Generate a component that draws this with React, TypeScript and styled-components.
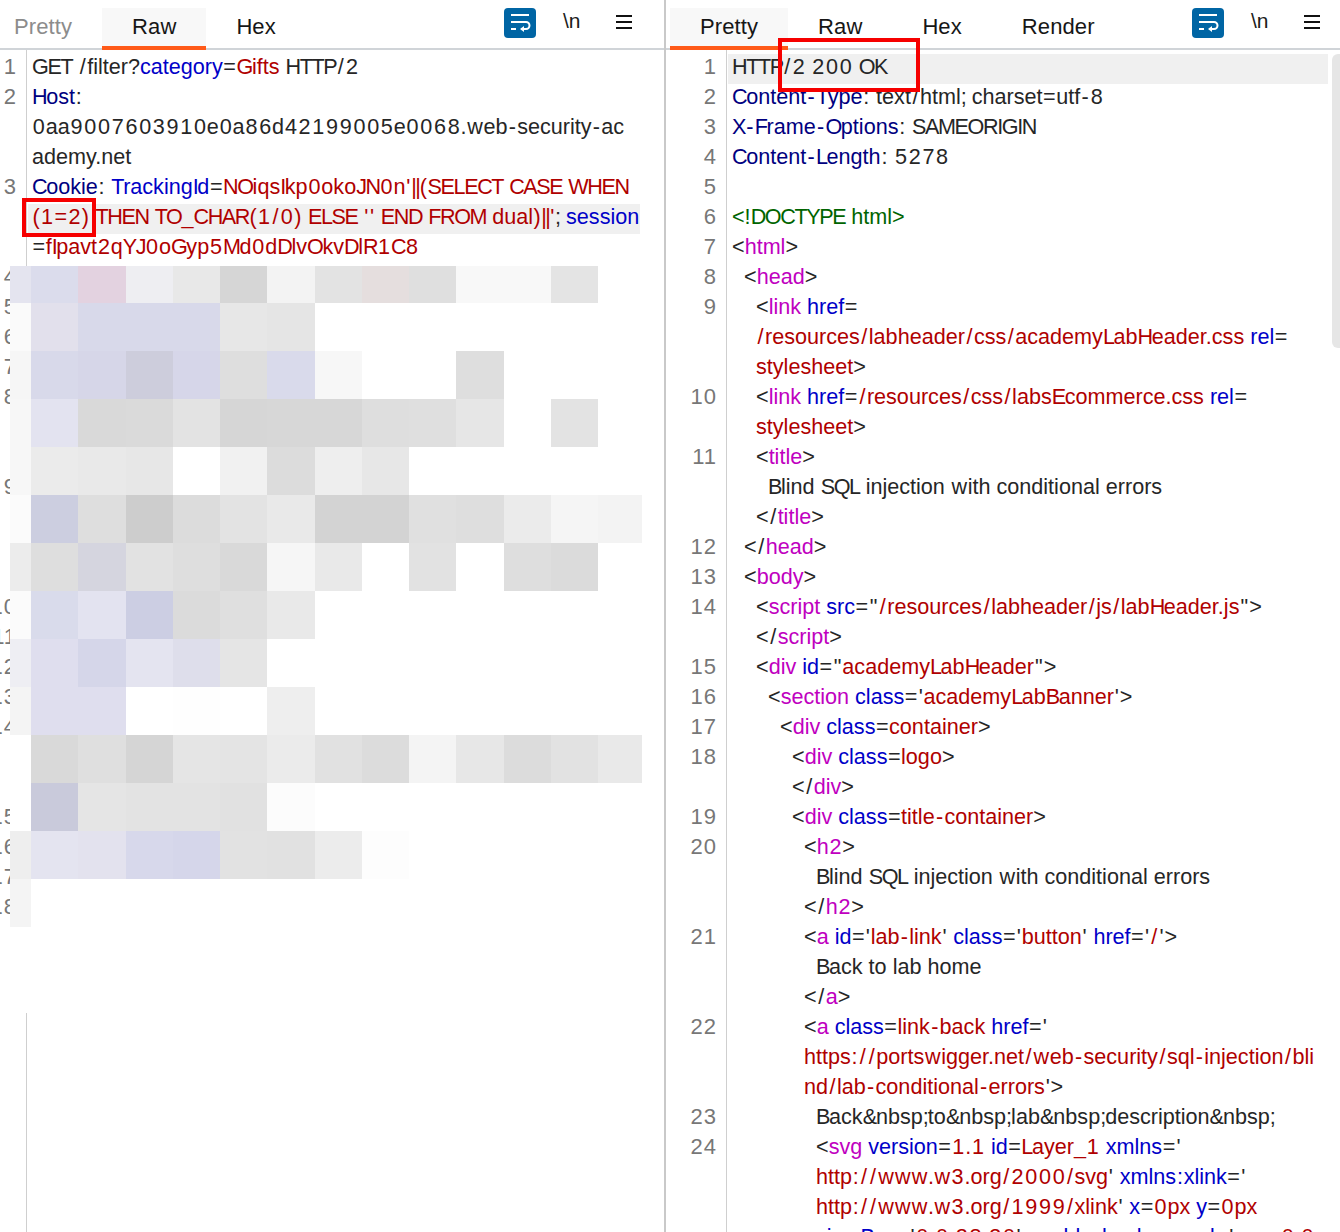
import React from "react";
import styled, { createGlobalStyle } from "styled-components";

const Global = createGlobalStyle`
  html, body { margin: 0; padding: 0; background: #fff; }
  body { width: 1340px; height: 1232px; overflow: hidden; font-family: "Liberation Sans", Arial, sans-serif; }
`;

const Page = styled.div`
  display: flex;
  width: 1340px;
  height: 1232px;
  overflow: hidden;
  position: relative;
`;
const Pane = styled.section<{ $w: number }>`
  width: ${(p) => p.$w}px;
  flex: none;
  display: flex;
  flex-direction: column;
  position: relative;
  overflow: hidden;
`;
const Divider = styled.div`
  width: 2px;
  flex: none;
  background: #c9c9c9;
`;
const Bar = styled.header<{ $start: number; $end: number }>`
  height: 50px;
  flex: none;
  box-sizing: border-box;
  border-bottom: 2px solid #d0d4d8;
  display: flex;
  padding: 0 ${(p) => p.$end}px 0 ${(p) => p.$start}px;
`;
const Tabs = styled.nav<{ $shift: number }>`
  display: flex;
  margin-left: ${(p) => p.$shift}px;
`;
const Tab = styled.div<{ $active?: boolean; $muted?: boolean }>`
  box-sizing: border-box;
  height: 42px;
  margin-top: 8px;
  padding: 6px 30px 0;
  font-size: 22px;
  line-height: 26px;
  letter-spacing: 0.1px;
  color: ${(p) => (p.$muted ? "#8c8c8c" : "#161616")};
  background: ${(p) => (p.$active ? "#f8f8f8" : "transparent")};
  border-bottom: 4px solid ${(p) => (p.$active ? "#ff5a19" : "transparent")};
`;
const Tools = styled.div`
  margin-left: auto;
  display: flex;
  align-items: flex-start;
`;
const Wrap = styled.svg`
  width: 32px;
  height: 30px;
  margin-top: 8px;
  display: block;
`;
const NewLine = styled.div`
  width: 18px;
  margin: 9px 0 0 27px;
  font-size: 21px;
  line-height: 24px;
  color: #1c1c1c;
`;
const Burger = styled.svg`
  width: 16px;
  height: 14px;
  margin: 15px 0 0 35px;
  display: block;
`;
const Editor = styled.div<{ $line: number }>`
  flex: 1;
  min-height: 0;
  padding-top: 4px;
  background: linear-gradient(#cfcfcf, #cfcfcf) no-repeat ${(p) => p.$line}px 0 / 1px 100%;
`;
const Row = styled.div`
  display: flex;
  height: 30px;
`;
const Num = styled.div<{ $w: number; $gap: number }>`
  width: ${(p) => p.$w}px;
  box-sizing: border-box;
  padding-right: ${(p) => p.$gap}px;
  flex: none;
  display: flex;
  justify-content: flex-end;
  font-size: 22px;
  line-height: 26px;
  color: #777;
  letter-spacing: 1px;
`;
const Code = styled.div<{ $pad: number; $mark?: boolean; $end: number }>`
  flex: 1;
  min-width: 0;
  box-sizing: border-box;
  margin-right: ${(p) => p.$end}px;
  padding-left: ${(p) => p.$pad}px;
  font-size: 21.6px;
  line-height: 26px;
  white-space: pre;
  color: #262626;
  background: ${(p) => (p.$mark ? "#f0f0f0" : "transparent")};
`;
const Tok = styled.span<{ $k: string }>`
  color: ${(p) =>
    ({ t: "#262626", h: "#000080", a: "#0000c8", v: "#b00000", m: "#c000c0", g: "#006400" } as Record<string, string>)[p.$k]};
`;
const Run = styled.span<{ $ls: number }>`
  letter-spacing: ${(p) => p.$ls}px;
  margin: 0 ${(p) => -Math.max(p.$ls, 0) / 2}px 0 ${(p) => Math.max(p.$ls, 0) / 2}px;
`;
const Mosaic = styled.div`
  position: absolute;
  left: 10px;
  top: 266px;
  width: 632px;
  height: 747px;
  background: #fff;
  display: grid;
  grid-template-columns: 21px repeat(12, 47.25px) 44px;
  grid-auto-rows: 48px;
  grid-template-rows: 37px;
`;
const Cell = styled.div<{ $c: string }>`
  background: ${(p) => p.$c};
`;
const Callout = styled.div<{ $x: number; $y: number; $w: number; $h: number }>`
  position: absolute;
  left: ${(p) => p.$x}px;
  top: ${(p) => p.$y}px;
  width: ${(p) => p.$w}px;
  height: ${(p) => p.$h}px;
  box-sizing: border-box;
  border: 4px solid #f60000;
`;
const Thumb = styled.div`
  position: absolute;
  right: 0;
  top: 54px;
  width: 8px;
  height: 294px;
  background: #e6e6e6;
  border-radius: 6px 0 0 6px;
`;

type T = [string, string];
type L = { n?: number; i?: number; mark?: boolean; x?: T[] };
const t = (s: string): T => ["t", s];
const h = (s: string): T => ["h", s];
const a = (s: string): T => ["a", s];
const v = (s: string): T => ["v", s];
const m = (s: string): T => ["m", s];
const g = (s: string): T => ["g", s];

const leftRows: L[] = [
  { n: 1, x: [t("GET /filter?"), a("category"), t("="), v("Gifts"), t(" HTTP/2")] },
  { n: 2, x: [h("Host"), t(":")] },
  { x: [t("0aa9007603910e0a86d42199005e0068.web-security-ac")] },
  { x: [t("ademy.net")] },
  { n: 3, x: [h("Cookie"), t(": "), a("TrackingId"), t("="), v("NOiqsIkp0okoJN0n'||(SELECT CASE WHEN")] },
  { mark: true, x: [v("(1=2) THEN TO_CHAR(1/0) ELSE '' END FROM dual)||'"), t("; "), a("session")] },
  { x: [t("="), v("fIpavt2qYJ0oGyp5Md0dDlvOkvDlR1C8")] },
  { n: 4 }, { n: 5 }, { n: 6 }, { n: 7 }, { n: 8 }, {}, {}, { n: 9 }, {}, {}, {},
  { n: 10 }, { n: 11 }, { n: 12 }, { n: 13 }, { n: 14 }, {}, {}, { n: 15 }, { n: 16 }, { n: 17 }, { n: 18 },
];

const tag = (name: string, ...rest: T[]): T[] => [t("<"), m(name), ...rest];

const rightRows: L[] = [
  { n: 1, mark: true, x: [t("HTTP/2 200 OK")] },
  { n: 2, x: [h("Content-Type"), t(": text/html; charset=utf-8")] },
  { n: 3, x: [h("X-Frame-Options"), t(": SAMEORIGIN")] },
  { n: 4, x: [h("Content-Length"), t(": 5278")] },
  { n: 5 },
  { n: 6, x: [g("<!DOCTYPE html>")] },
  { n: 7, x: tag("html", t(">")) },
  { n: 8, i: 1, x: tag("head", t(">")) },
  { n: 9, i: 2, x: tag("link", t(" "), a("href"), t("=")) },
  { i: 2, x: [v("/resources/labheader/css/academyLabHeader.css"), t(" "), a("rel"), t("=")] },
  { i: 2, x: [v("stylesheet"), t(">")] },
  { n: 10, i: 2, x: tag("link", t(" "), a("href"), t("="), v("/resources/css/labsEcommerce.css"), t(" "), a("rel"), t("=")) },
  { i: 2, x: [v("stylesheet"), t(">")] },
  { n: 11, i: 2, x: tag("title", t(">")) },
  { i: 3, x: [t("Blind SQL injection with conditional errors")] },
  { i: 2, x: [t("</"), m("title"), t(">")] },
  { n: 12, i: 1, x: [t("</"), m("head"), t(">")] },
  { n: 13, i: 1, x: tag("body", t(">")) },
  { n: 14, i: 2, x: tag("script", t(" "), a("src"), t('="'), v("/resources/labheader/js/labHeader.js"), t('">')) },
  { i: 2, x: [t("</"), m("script"), t(">")] },
  { n: 15, i: 2, x: tag("div", t(" "), a("id"), t('="'), v("academyLabHeader"), t('">')) },
  { n: 16, i: 3, x: tag("section", t(" "), a("class"), t("='"), v("academyLabBanner"), t("'>")) },
  { n: 17, i: 4, x: tag("div", t(" "), a("class"), t("="), v("container"), t(">")) },
  { n: 18, i: 5, x: tag("div", t(" "), a("class"), t("="), v("logo"), t(">")) },
  { i: 5, x: [t("</"), m("div"), t(">")] },
  { n: 19, i: 5, x: tag("div", t(" "), a("class"), t("="), v("title-container"), t(">")) },
  { n: 20, i: 6, x: tag("h2", t(">")) },
  { i: 7, x: [t("Blind SQL injection with conditional errors")] },
  { i: 6, x: [t("</"), m("h2"), t(">")] },
  { n: 21, i: 6, x: tag("a", t(" "), a("id"), t("='"), v("lab-link"), t("' "), a("class"), t("='"), v("button"), t("' "), a("href"), t("='"), v("/"), t("'>")) },
  { i: 7, x: [t("Back to lab home")] },
  { i: 6, x: [t("</"), m("a"), t(">")] },
  { n: 22, i: 6, x: tag("a", t(" "), a("class"), t("="), v("link-back"), t(" "), a("href"), t("='")) },
  { i: 6, x: [v("https://portswigger.net/web-security/sql-injection/bli")] },
  { i: 6, x: [v("nd/lab-conditional-errors"), t("'>")] },
  { n: 23, i: 7, x: [t("Back&nbsp;to&nbsp;lab&nbsp;description&nbsp;")] },
  { n: 24, i: 7, x: tag("svg", t(" "), a("version"), t("="), v("1.1"), t(" "), a("id"), t("="), v("Layer_1"), t(" "), a("xmlns"), t("='")) },
  { i: 7, x: [v("http://www.w3.org/2000/svg"), t("' "), a("xmlns:xlink"), t("='")] },
  { i: 7, x: [v("http://www.w3.org/1999/xlink"), t("' "), a("x"), t("="), v("0px"), t(" "), a("y"), t("="), v("0px")] },
  { i: 7, x: [a("viewBox"), t("='"), v("0 0 28 30"), t("' "), a("enable-background"), t("='"), v("new 0 0")] },
];

const mosaic: string[][] = [
  ["#e4e4ef", "#dbdcec", "#e3d2e0", "#eeeef2", "#e8e8e8", "#d6d6d6", "#f3f3f3", "#e3e3e3", "#e5dede", "#dfdfdf", "#f8f8f8", "#f8f8f8", "#e4e4e4", "#fff"],
  ["#fafafa", "#e2e0ec", "#d8d9ea", "#d8d9ea", "#d8d9ea", "#e7e7e7", "#e5e5e5", "#fff", "#fff", "#fff", "#fff", "#fff", "#fff", "#fff"],
  ["#f6f6f6", "#d8d9ea", "#d6d6e8", "#cdcddc", "#d6d6e9", "#dedede", "#d9daeb", "#f7f7f7", "#fff", "#fff", "#dedede", "#fff", "#fff", "#fff"],
  ["#f7f7f7", "#e3e3f0", "#d9d9d9", "#dadada", "#e3e3e3", "#d6d6d6", "#d7d7d7", "#d7d7d7", "#dedede", "#dfdfdf", "#e6e6e6", "#fff", "#e3e3e3", "#fff"],
  ["#f7f7f7", "#ebebeb", "#e9e9e9", "#e7e7e7", "#fff", "#f1f1f1", "#dcdcdc", "#eeeeee", "#e7e7e7", "#fff", "#fff", "#fff", "#fff", "#fff"],
  ["#fbfbfb", "#ccceE0", "#dedede", "#cdcdcd", "#dcdcdc", "#e3e3e3", "#e9e9e9", "#d3d3d3", "#d3d3d3", "#e0e0e0", "#dedede", "#ebebeb", "#f5f5f5", "#f3f3f3"],
  ["#ececec", "#dedede", "#d5d5df", "#e2e2e2", "#dedede", "#d9d9d9", "#f6f6f6", "#e9e9e9", "#fff", "#e2e2e2", "#fff", "#dedede", "#dbdbdb", "#fff"],
  ["#fbfbfb", "#d9dbeb", "#e3e3f0", "#ccceE3", "#dbdbdb", "#dfdfdf", "#e9e9e9", "#fff", "#fff", "#fff", "#fff", "#fff", "#fff", "#fff"],
  ["#eeeef3", "#dfdeee", "#d5d6e9", "#e4e4f0", "#dedeeb", "#e5e5e5", "#fff", "#fff", "#fff", "#fff", "#fff", "#fff", "#fff", "#fff"],
  ["#f4f4f4", "#dfdeee", "#dfdeee", "#fff", "#fefefe", "#fff", "#eeeeee", "#fff", "#fff", "#fff", "#fff", "#fff", "#fff", "#fff"],
  ["#fff", "#d9d9d9", "#dfdfdf", "#d5d5d5", "#e5e5e5", "#e4e4e4", "#ebebeb", "#e1e1e1", "#dcdcdc", "#f4f4f4", "#e7e7e7", "#dcdcdc", "#e2e2e2", "#e9e9e9"],
  ["#fff", "#c9cadb", "#e5e5e5", "#e3e3e3", "#e3e3e3", "#e1e1e1", "#fcfcfc", "#fff", "#fff", "#fff", "#fff", "#fff", "#fff", "#fff"],
  ["#eeeeee", "#e4e4f0", "#e3e2ee", "#d7d8eb", "#d5d6ea", "#e2e2e2", "#e1e1e1", "#ececec", "#fdfdfd", "#fff", "#fff", "#fff", "#fff", "#fff"],
  ["#f4f4f4"],
];

const spacingOf = (run: string): number => {
  const c = run[0];
  if (/\d/.test(c)) return 1.7;
  if (/[A-Z]/.test(c)) return -1.4;
  if (c === "/") return 3;
  if (c === "-") return 2.5;
  if (c === "w") return 1.2;
  if (c === "|") return -1.5;
  if (c === "&" || c === ";") return -1;
  if (c === ":") return 1.5;
  if (c === "=" || c === "(" || c === ")") return 1;
  if (c === "'") return 1.5;
  if (c === '"') return 2;
  return 0;
};
const runsOf = (s: string): string[] =>
  s.match(/\d+|[A-Z]+|\/+|-+|w+|\|+|[&;]+|:+|=+|\(+|\)+|'+|"+|[^\dA-Z\/\-w|&;:=()'"]+/g) ?? [];

const WrapIcon = () => (
  <Wrap viewBox="0 0 32 30">
    <rect width="32" height="30" rx="4" fill="#0065a4" />
    <path d="M7 7h18M7 14h15a3.5 3.5 0 0 1 0 7h-5M7 21h5" fill="none" stroke="#fff" strokeWidth="2" />
    <path d="M20 18l-4 3 4 3z" fill="#fff" />
  </Wrap>
);
const BurgerIcon = () => (
  <Burger viewBox="0 0 16 14">
    <path d="M0 1h16M0 7h16M0 13h16" stroke="#111" strokeWidth="2" />
  </Burger>
);

const Lines = ({ rows, gutter, gap, end }: { rows: L[]; gutter: number; gap: number; end: number }) => (
  <>
    {rows.map((r, i) => (
      <Row key={i}>
        <Num $w={gutter} $gap={gap}>{r.n}</Num>
        <Code $pad={4 + (r.i ?? 0) * 12} $mark={r.mark} $end={end}>
          {(r.x ?? []).map(([k, s], j) => (
            <Tok key={j} $k={k}>
              {runsOf(s).map((run, q) => (
                <Run key={q} $ls={spacingOf(run)}>{run}</Run>
              ))}
            </Tok>
          ))}
        </Code>
      </Row>
    ))}
  </>
);

export default function App() {
  return (
    <Page>
      <Global />
      <Pane $w={664}>
        <Bar $start={0} $end={32}>
          <Tabs $shift={-16}>
            <Tab $muted>Pretty</Tab>
            <Tab $active>Raw</Tab>
            <Tab>Hex</Tab>
          </Tabs>
          <Tools>
            <WrapIcon />
            <NewLine>\n</NewLine>
            <BurgerIcon />
          </Tools>
        </Bar>
        <Editor $line={26}>
          <Lines rows={leftRows} gutter={28} gap={11} end={24} />
        </Editor>
        <Mosaic>
          {mosaic.flatMap((row, i) => row.map((c, j) => <Cell key={`${i}-${j}`} $c={c} />))}
        </Mosaic>
        <Callout $x={22} $y={198} $w={74} $h={39} />
      </Pane>
      <Divider />
      <Pane $w={674}>
        <Bar $start={4} $end={20}>
          <Tabs $shift={0}>
            <Tab $active>Pretty</Tab>
            <Tab>Raw</Tab>
            <Tab>Hex</Tab>
            <Tab>Render</Tab>
          </Tabs>
          <Tools>
            <WrapIcon />
            <NewLine>\n</NewLine>
            <BurgerIcon />
          </Tools>
        </Bar>
        <Editor $line={60}>
          <Lines rows={rightRows} gutter={62} gap={11} end={12} />
        </Editor>
        <Thumb />
        <Callout $x={112} $y={38} $w={142} $h={54} />
      </Pane>
    </Page>
  );
}
